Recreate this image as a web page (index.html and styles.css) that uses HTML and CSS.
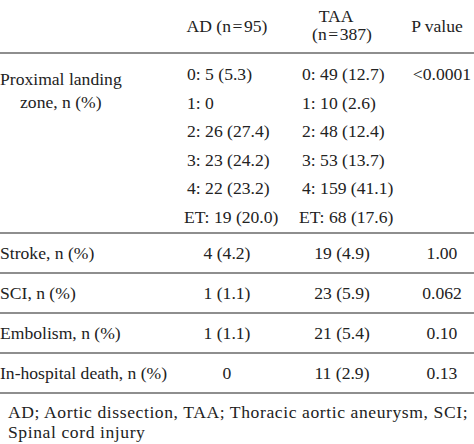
FILE: index.html
```html
<!DOCTYPE html>
<html>
<head>
<meta charset="utf-8">
<link rel="stylesheet" href="styles.css">
</head>
<body>
<div class="table">
  <div class="row head">
    <div class="cell label"></div>
    <div class="cell center">AD (n<span class="eq">=</span>95)</div>
    <div class="cell center two"><span class="taa">TAA</span><br>(n<span class="eq">=</span>387)</div>
    <div class="cell center pval">P value</div>
  </div>
  <div class="row zone">
    <div class="cell label"><div class="zone-label">Proximal landing<br>zone, n (%)</div></div>
    <div class="cell list ad-list">
      <div>0: 5 (5.3)</div>
      <div>1: 0</div>
      <div>2: 26 (27.4)</div>
      <div>3: 23 (24.2)</div>
      <div>4: 22 (23.2)</div>
      <div class="et">ET: 19 (20.0)</div>
    </div>
    <div class="cell list taa-list">
      <div>0: 49 (12.7)</div>
      <div>1: 10 (2.6)</div>
      <div>2: 48 (12.4)</div>
      <div>3: 53 (13.7)</div>
      <div>4: 159 (41.1)</div>
      <div class="et">ET: 68 (17.6)</div>
    </div>
    <div class="cell list center">&lt;0.0001</div>
  </div>
  <div class="row simple">
    <div class="cell label">Stroke, n (%)</div>
    <div class="cell center">4 (4.2)</div>
    <div class="cell center">19 (4.9)</div>
    <div class="cell center">1.00</div>
  </div>
  <div class="row simple">
    <div class="cell label">SCI, n (%)</div>
    <div class="cell center">1 (1.1)</div>
    <div class="cell center">23 (5.9)</div>
    <div class="cell center">0.062</div>
  </div>
  <div class="row simple">
    <div class="cell label">Embolism, n (%)</div>
    <div class="cell center">1 (1.1)</div>
    <div class="cell center">21 (5.4)</div>
    <div class="cell center">0.10</div>
  </div>
  <div class="row simple">
    <div class="cell label">In-hospital death, n (%)</div>
    <div class="cell center">0</div>
    <div class="cell center">11 (2.9)</div>
    <div class="cell center">0.13</div>
  </div>
</div>
<p class="note">AD; Aortic dissection, TAA; Thoracic aortic aneurysm, SCI; Spinal cord injury</p>
</body>
</html>
```

FILE: styles.css
```css
html, body {
  margin: 0;
  padding: 0;
  background: #ffffff;
}

body {
  font-family: "Liberation Serif", "Times New Roman", serif;
  font-size: 17.6px;
  color: #222222;
  width: 474px;
  overflow: hidden;
}

.table {
  display: flex;
  flex-direction: column;
}

.row {
  display: grid;
  grid-template-columns: 180px 94px 136px 64px;
  border-bottom: 2px solid #8e8e8e;
}

.cell {
  white-space: nowrap;
}

.center {
  text-align: center;
}

.eq {
  margin: 0 1.5px;
}

.head {
  height: 52px;
  align-items: center;
}

.head .cell {
  line-height: 18.5px;
}

.head .cell.center {
  padding-top: 1px;
}

.head .two {
  padding-top: 0;
  margin-top: -3px;
}

.head .taa {
  display: inline-block;
  margin-right: 12px;
}

.head .pval {
  padding-right: 10px;
}

.zone {
  padding-top: 6px;
  height: 172px;
}

.list {
  line-height: 28.6px;
}

.ad-list {
  padding-left: 7px;
}

.taa-list {
  padding-left: 28px;
}

.list .et {
  margin-left: -3px;
}

.zone-label {
  width: max-content;
  text-align: center;
  line-height: 23px;
  padding-top: 8px;
}

.simple {
  height: 38px;
  align-items: center;
  line-height: 20px;
}

.note {
  margin: 0;
  padding: 8px 0 0 8px;
  line-height: 20px;
  letter-spacing: 0.58px;
}
```
